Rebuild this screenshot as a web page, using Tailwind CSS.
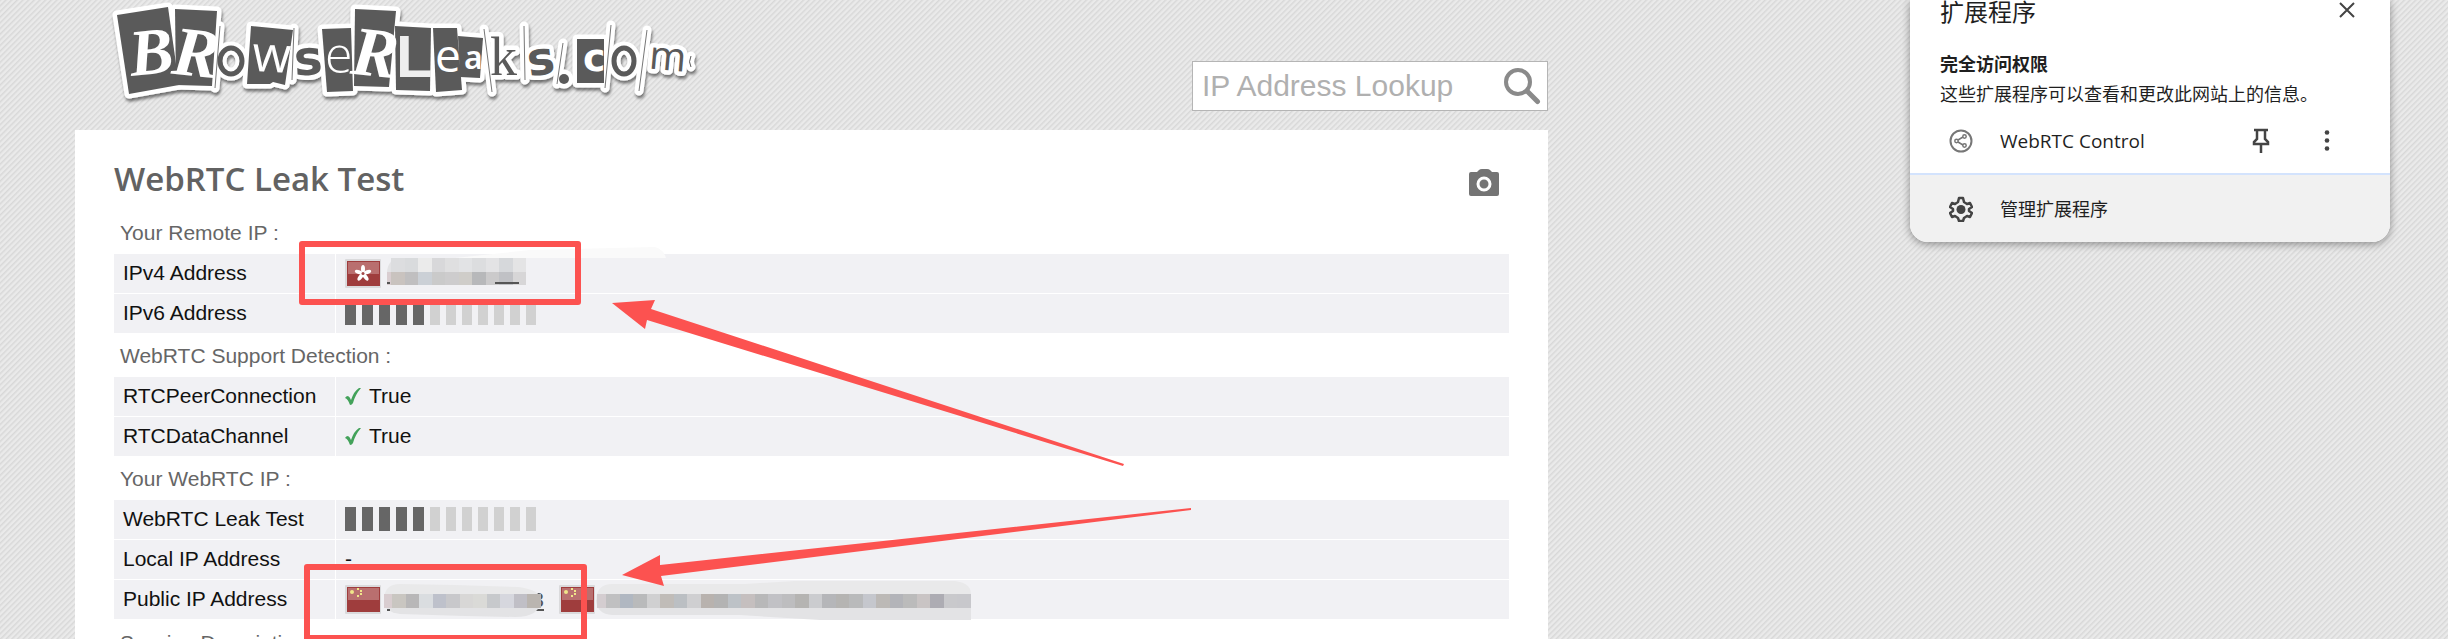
<!DOCTYPE html>
<html lang="en">
<head>
    <meta charset="UTF-8">
    <meta name="viewport" content="width=device-width, initial-scale=1.0">
    <title>WebRTC Leak Test - BrowserLeaks.com</title>
    <!-- Tailwind CSS CDN -->
    <script src="https://cdn.jsdelivr.net/npm/@tailwindcss/browser@4"></script>
</head>
<body class="relative h-screen overflow-hidden bg-[#e2e2e2] bg-[repeating-linear-gradient(135deg,#d8d8d8_0px,#eaeaea_2px,#eaeaea_3px,#d8d8d8_4px)] font-['Liberation_Sans',Arial,sans-serif] text-[21px] leading-7 text-[#111]">

    <div class="ml-[75px] w-full max-w-[1473px]">

        <!-- Header -->
        <header class="flex items-end justify-between pb-[19px] pl-[35px]">
            <a href="#" aria-label="BrowserLeaks.com">
                <svg width="600" height="111" viewBox="0 0 600 111">
                    <defs>
                        <filter id="logo-shadow" x="-5%" y="-10%" width="110%" height="130%">
                            <feDropShadow dx="1" dy="3" stdDeviation="1.5" flood-color="#000" flood-opacity="0.5"/>
                        </filter>
                        <g id="tiles">
                            <path d="M7 15 58 7 69 85 19 94Z"/>
                            <path d="M65 9 107 11 102 86 66 85Z"/>
                            <path d="M141 26 183 30 175 85 163 82 160 84 137 84Z"/>
                            <path d="M212 29 241 28 243 91 217 92Z"/>
                            <path d="M245 9 286 11 279 87 244 86Z"/>
                            <path d="M285 26 321 28 320 91 286 90Z"/>
                            <path d="M323 28 347 28 352 90 326 92Z"/>
                            <path d="M348 36 373 38 370 78 350 77Z"/>
                            <path d="M467 39 494 39 494 83 467 83Z"/>
                        </g>
                        <path id="cuts" d="M110 26 105 88M184 28 182 80M374 29 382 92M414 26 415 80M453 43 447 84M501 25 495 88M537 30 529 91"/>
                        <g id="loose">
                            <text x="184" y="75" font-family="DejaVu Sans, sans-serif" font-weight="bold" font-size="48" transform="rotate(-3 195 60)">s</text>
                            <text x="380" y="75" font-family="Liberation Serif, serif" font-size="54">k</text>
                            <text x="417" y="75" font-family="DejaVu Sans, sans-serif" font-weight="bold" font-size="46" transform="rotate(-8 428 60)">s</text>
                            <circle cx="454" cy="79" r="5"/>
                            <text x="539" y="70" font-family="Open Sans, sans-serif" font-size="40" transform="rotate(5 556 60)">m</text>
                        </g>
                    </defs>
                    <g filter="url(#logo-shadow)" fill="#fff" stroke="#fff" stroke-width="9" stroke-linejoin="round" stroke-linecap="round">
                        <use href="#tiles"/>
                        <use href="#cuts"/>
                        <use href="#loose"/>
                        <g fill="none" stroke-width="13">
                            <ellipse cx="121" cy="61" rx="11" ry="13"/>
                            <ellipse cx="514" cy="61" rx="10" ry="13"/>
                            <path d="M581 56q-3 6 0 11" stroke-width="9"/>
                        </g>
                    </g>
                    <use href="#tiles" fill="#5a5a5a"/>
                    <use href="#cuts" stroke="#777" stroke-width="1"/>
                    <use href="#loose" fill="#5a5a5a"/>
                    <g fill="none" stroke="#5a5a5a" stroke-width="5">
                        <ellipse cx="121" cy="61" rx="11" ry="13"/>
                        <ellipse cx="514" cy="61" rx="10" ry="13"/>
                        <path d="M581 56q-3 6 0 11" stroke-width="1"/>
                    </g>
                    <g fill="#fff">
                        <text x="19" y="74" font-family="Liberation Serif, serif" font-style="italic" font-weight="bold" font-size="66" transform="rotate(-6 40 50)">B</text>
                        <text x="63" y="76" font-family="Liberation Serif, serif" font-style="italic" font-weight="bold" font-size="70" transform="rotate(6 85 50)">R</text>
                        <text x="142" y="72" font-family="Open Sans, sans-serif" font-size="50" transform="rotate(3 160 60)">w</text>
                        <text x="215" y="73" font-family="Open Sans, sans-serif" font-weight="300" font-size="50">e</text>
                        <text x="242" y="76" font-family="Liberation Serif, serif" font-style="italic" font-weight="bold" font-size="70" transform="rotate(6 264 50)">R</text>
                        <text x="286" y="77" font-family="Liberation Sans, sans-serif" font-weight="bold" font-size="60" fill="#eee">L</text>
                        <text x="325" y="72" font-family="Open Sans, sans-serif" font-size="46">e</text>
                        <text x="354" y="69" font-family="Noto Sans, sans-serif" font-weight="600" font-size="32">a</text>
                        <text x="473" y="71" font-family="DejaVu Sans, sans-serif" font-weight="bold" font-size="38">c</text>
                    </g>
                </svg>
            </a>
            <form class="flex h-[50px] w-[356px] items-center border border-[#b5b5b5] bg-white pl-[9px] pr-[6px]">
                <input type="text" aria-label="IP Address Lookup" placeholder="IP Address Lookup" class="min-w-0 flex-1 text-[30px] leading-10 outline-none placeholder:text-[#b0b0b0]">
                <button type="submit" aria-label="Search">
                    <svg width="38" height="38" viewBox="0 0 38 38" fill="none" stroke="#8a8a8a">
                        <circle cx="15" cy="15" r="12" stroke-width="4"/>
                        <path d="M24 24 34.500 34.500" stroke-width="5" stroke-linecap="round"/>
                    </svg>
                </button>
            </form>
        </header>

        <!-- Content -->
        <main class="bg-white px-[39px] pt-5">
            <div class="flex h-[60px] items-center justify-between pr-[9px]">
                <h1 class="pb-0.5 font-['Open_Sans',sans-serif] text-[33px] font-semibold leading-[58px] text-[#626262]">WebRTC Leak Test</h1>
                <button type="button" aria-label="Take screenshot" class="pt-1">
                    <svg width="32" height="30" viewBox="0 0 32 30">
                        <path fill="#747474" d="M3 5h6l2-2q1-1 3-1h5q2 0 3 1l2 2h5q2 0 2 2v20q0 2-2 2H3q-2 0-2-2V7q0-2 2-2z"/>
                        <circle cx="16" cy="17" r="6" fill="#747474" stroke="#fff" stroke-width="3"/>
                    </svg>
                </button>
            </div>

            <table class="w-full table-fixed border-separate border-spacing-0">
                <caption class="h-11 pl-1.5 text-left leading-[46px] text-[#666]">Your Remote IP :</caption>
                <tbody>
                    <tr class="bg-[#f1f1f4]">
                        <th scope="row" class="h-[39px] w-[222px] border-r border-white pb-0.5 pl-[9px] text-left font-normal">IPv4 Address</th>
                        <td class="pl-[9px]">
                            <svg width="36" height="29" viewBox="0 0 36 29" role="img" aria-label="Hong Kong">
                                <rect width="36" height="29" rx="1" fill="#dadadc"/>
                                <rect x="2" y="2" width="33" height="25" fill="#9f3d3d"/>
                                <rect x="3" y="3" width="31" height="12" fill="#b96f6f"/>
                                <g fill="#fff">
                                    <ellipse cx="18" cy="10" rx="2" ry="4"/>
                                    <ellipse cx="18" cy="10" rx="2" ry="4" transform="rotate(72 18 14.500)"/>
                                    <ellipse cx="18" cy="10" rx="2" ry="4" transform="rotate(144 18 14.500)"/>
                                    <ellipse cx="18" cy="10" rx="2" ry="4" transform="rotate(216 18 14.500)"/>
                                    <ellipse cx="18" cy="10" rx="2" ry="4" transform="rotate(288 18 14.500)"/>
                                </g>
                                <circle cx="18" cy="14.500" r="1.500" fill="#a34848"/>
                            </svg>
                        </td>
                    </tr>
                    <tr class="bg-[#f1f1f4]">
                        <th scope="row" class="h-10 border-r border-t border-white pb-0.5 pl-[9px] text-left font-normal">IPv6 Address</th>
                        <td class="border-t border-white pb-0.5 pl-[9px]">
                            <div class="flex gap-1.5">
                                <i class="h-6 w-[11px] bg-[#666]"></i><i class="h-6 w-[11px] bg-[#666]"></i><i class="h-6 w-[11px] bg-[#666]"></i><i class="h-6 w-[11px] bg-[#666]"></i><i class="h-6 w-[11px] bg-[#666]"></i>
                                <i class="h-6 w-2.5 bg-[#d1d1d1]"></i><i class="h-6 w-2.5 bg-[#d1d1d1]"></i><i class="h-6 w-2.5 bg-[#d1d1d1]"></i><i class="h-6 w-2.5 bg-[#d1d1d1]"></i><i class="h-6 w-2.5 bg-[#d1d1d1]"></i><i class="h-6 w-2.5 bg-[#d1d1d1]"></i><i class="h-6 w-2.5 bg-[#d1d1d1]"></i>
                            </div>
                        </td>
                    </tr>
                </tbody>
            </table>

            <table class="w-full table-fixed border-separate border-spacing-0">
                <caption class="h-11 pl-1.5 text-left leading-[46px] text-[#666]">WebRTC Support Detection :</caption>
                <tbody>
                    <tr class="bg-[#f1f1f4]">
                        <th scope="row" class="h-[39px] w-[222px] border-r border-white pb-0.5 pl-[9px] text-left font-normal">RTCPeerConnection</th>
                        <td class="pb-0.5 pl-[9px]">
                            <div class="flex items-center gap-2">
                                <svg width="16" height="18" viewBox="0 0 16 18"><path fill="#43a25a" d="M0 11q1-2 3-2 2 1 3 4Q9 4 14 1l2 0Q10 8 8 16q-1 2-3 2Q3 12 0 11z"/></svg>
                                True
                            </div>
                        </td>
                    </tr>
                    <tr class="bg-[#f1f1f4]">
                        <th scope="row" class="h-10 border-r border-t border-white pb-0.5 pl-[9px] text-left font-normal">RTCDataChannel</th>
                        <td class="border-t border-white pb-0.5 pl-[9px]">
                            <div class="flex items-center gap-2">
                                <svg width="16" height="18" viewBox="0 0 16 18"><path fill="#43a25a" d="M0 11q1-2 3-2 2 1 3 4Q9 4 14 1l2 0Q10 8 8 16q-1 2-3 2Q3 12 0 11z"/></svg>
                                True
                            </div>
                        </td>
                    </tr>
                </tbody>
            </table>

            <table class="w-full table-fixed border-separate border-spacing-0">
                <caption class="h-11 pl-1.5 text-left leading-[46px] text-[#666]">Your WebRTC IP :</caption>
                <tbody>
                    <tr class="bg-[#f1f1f4]">
                        <th scope="row" class="h-[39px] w-[222px] border-r border-white pb-0.5 pl-[9px] text-left font-normal">WebRTC Leak Test</th>
                        <td class="pb-0.5 pl-[9px]">
                            <div class="flex gap-1.5">
                                <i class="h-6 w-[11px] bg-[#666]"></i><i class="h-6 w-[11px] bg-[#666]"></i><i class="h-6 w-[11px] bg-[#666]"></i><i class="h-6 w-[11px] bg-[#666]"></i><i class="h-6 w-[11px] bg-[#666]"></i>
                                <i class="h-6 w-2.5 bg-[#d1d1d1]"></i><i class="h-6 w-2.5 bg-[#d1d1d1]"></i><i class="h-6 w-2.5 bg-[#d1d1d1]"></i><i class="h-6 w-2.5 bg-[#d1d1d1]"></i><i class="h-6 w-2.5 bg-[#d1d1d1]"></i><i class="h-6 w-2.5 bg-[#d1d1d1]"></i><i class="h-6 w-2.5 bg-[#d1d1d1]"></i>
                            </div>
                        </td>
                    </tr>
                    <tr class="bg-[#f1f1f4]">
                        <th scope="row" class="h-10 border-r border-t border-white pb-0.5 pl-[9px] text-left font-normal">Local IP Address</th>
                        <td class="border-t border-white pb-0.5 pl-[9px]">-</td>
                    </tr>
                    <tr class="bg-[#f1f1f4]">
                        <th scope="row" class="h-10 border-r border-t border-white pb-0.5 pl-[9px] text-left font-normal">Public IP Address</th>
                        <td class="border-t border-white pl-[9px]">
                            <div class="flex items-center">
                                <svg width="36" height="29" viewBox="0 0 36 29" role="img" aria-label="China">
                                    <g id="flag-cn">
                                        <rect width="36" height="29" rx="1" fill="#dadadc"/>
                                        <rect x="2" y="2" width="33" height="25" fill="#9f3d3d"/>
                                        <rect x="3" y="3" width="31" height="12" fill="#b96f6f"/>
                                        <g fill="#f0e68a">
                                            <circle cx="7" cy="7" r="2"/>
                                            <path d="M12 3h2v2h-2zM15 5h2v2h-2zM15 8h2v2h-2zM12 10h2v2h-2z"/>
                                        </g>
                                    </g>
                                </svg>
                                <a href="#" class="ml-1.5 w-[157px] text-right text-[#555] underline">3</a>
                                <svg width="36" height="29" viewBox="0 0 36 29" class="ml-[15px]" role="img" aria-label="China"><use href="#flag-cn"/></svg>
                            </div>
                        </td>
                    </tr>
                </tbody>
            </table>

            <h2 class="h-11 pl-1.5 leading-[48px] text-[#666]">Session Description :</h2>
        </main>
    </div>

    <!-- Annotations: hidden addresses, boxes and arrows -->
    <svg class="pointer-events-none absolute left-0 top-0" width="1300" height="639" viewBox="0 0 1300 639">
        <path fill="#fafafa" d="M455 258 530 250 655 247Q664 250 666 258Z"/>
        <g fill="#e3e3e5">
            <path d="M387 272Q388 258 402 258H525V281L512 285H395Q387 285 387 272Z"/>
            <path d="M384 600H541Q540 617 515 617L465 616 400 614Q384 612 384 600Z"/>
            <path d="M596 600H971V620H820L740 615H612Q597 614 596 600Z"/>
        </g>
        <g fill="#e9e9ea">
            <path d="M384 600Q384 584 400 584L455 585 518 587Q541 590 541 600Z"/>
            <path d="M596 600Q597 584 612 584L745 584 795 581H955Q971 583 971 594V600Z"/>
        </g>
        <g id="mosaic"></g>
        <path fill="#555" d="M387 282h3v2h-3zM387 609h3v2h-3zM495 282h24v2h-24z"/>
        <g fill="none" stroke="#fc5250" stroke-width="6" stroke-linejoin="round">
            <rect x="302" y="244" width="276" height="58"/>
            <rect x="307" y="567" width="277" height="71"/>
        </g>
        <g fill="#fc5250">
            <path d="M612 303 655 300 651 309 1124 464 1123 466 647 320 645 329Z"/>
            <path d="M622 575 660 555 660 565 1191 508 1191 510 661 576 664 586Z"/>
        </g>
    </svg>

    <!-- Extensions popup -->
    <aside lang="zh-CN" class="absolute right-[58px] top-0 w-[480px] overflow-hidden rounded-b-[18px] bg-white font-['Open_Sans','Noto_Sans_CJK_SC',sans-serif] text-lg leading-[30px] text-[#1f1f1f] shadow-[0_2px_8px_rgba(0,0,0,0.4)]">
        <div class="px-[30px]">
            <div class="flex h-6 items-center justify-between">
                <h2 class="text-2xl leading-6">扩展程序</h2>
                <button type="button" aria-label="关闭" class="mb-1 mr-1">
                    <svg width="18" height="18" viewBox="0 0 18 18" stroke="#444" stroke-width="2"><path d="M2 2 16 16M16 2 2 16"/></svg>
                </button>
            </div>
            <h3 class="mt-[25px] font-bold">完全访问权限</h3>
            <p>这些扩展程序可以查看和更改此网站上的信息。</p>
            <div class="flex h-16 items-center pl-[9px] pr-6">
                <svg width="24" height="24" viewBox="0 0 24 24" fill="none" stroke="#777" stroke-width="1.500">
                    <circle cx="12" cy="12" r="10.500" stroke-width="2"/>
                    <path d="M9 11 14 8M9 13 14 16"/>
                    <circle cx="7.500" cy="12" r="1.700"/>
                    <circle cx="15.500" cy="7.500" r="1.700"/>
                    <circle cx="15.500" cy="16.500" r="1.700"/>
                </svg>
                <span class="ml-[27px] flex-1 text-[19px]">WebRTC Control</span>
                <button type="button" aria-label="固定">
                    <svg width="18" height="26" viewBox="0 0 18 26" fill="none" stroke="#444" stroke-width="2.500">
                        <path d="M2 2H16M5 2V11L2 14V16H16V14L13 11V2M9 16V25"/>
                    </svg>
                </button>
                <button type="button" aria-label="更多" class="ml-12">
                    <svg width="18" height="24" viewBox="0 0 18 24" fill="#444"><circle cx="9" cy="3.500" r="2.300"/><circle cx="9" cy="11.500" r="2.300"/><circle cx="9" cy="19.500" r="2.300"/></svg>
                </button>
            </div>
        </div>
        <button type="button" class="flex h-[69px] w-full items-center border-t-2 border-[#d3e3fd] bg-[#f1f1f1] pl-[39px]">
            <svg width="24" height="26" viewBox="0 0 24 26">
                <path fill="none" stroke="#444" stroke-width="2.500" stroke-linejoin="round" d="M10 2h4l1 4 3 2 3-1 2 4-3 2v2l3 2-2 4-3-1-3 2-1 3h-4l-1-3-3-2-3 1-2-4 3-2v-2L1 11l2-4 3 1 3-2z"/>
                <circle cx="12" cy="13.500" r="4.500" fill="#444"/>
            </svg>
            <span class="ml-[27px]">管理扩展程序</span>
        </button>
    </aside>

    <script>
        // each row: x start, y, height, block width, colours
        const rows = [
            [391, 258, 14, 13.5, ['#dcdddf', '#d9dbdd', '#ebebeb', '#d8d8da', '#dfdfe0', '#e2e3e5', '#dcdddf', '#e3e3e5', '#d6d8db', '#e4e4e5']],
            [387, 272, 13, 4, ['#d9cdd0']],
            [391, 272, 13, 13.5, ['#c9c3bf', '#c0bfc0', '#cbd0d6', '#cacaca', '#cdcccd', '#cfcdc9', '#b7b8ba', '#cbcacb', '#c0c1c5', '#d7d6d7']],
            [384, 594, 14, 8, ['#d9cdd0']],
            [392, 594, 14, 13.5, ['#c9c6c1', '#b8b7b8', '#dadde0', '#bec1cb', '#c8c8cb', '#d8d7d6', '#dadad7', '#c7c9cc', '#d6d7de', '#c0bfc6', '#bab5b0']],
            [597, 594, 14, 9, ['#d4cdd0']],
            [606, 594, 14, 13.5, ['#c0c0c1', '#b0b7c1', '#b9babb', '#d0d0d1', '#c0bcb8', '#bbbfc3', '#cfcfd1', '#b8b2ae', '#b3b3b3', '#bdc2c7', '#c5bfbf', '#b8b8b9', '#c1c1c5', '#bdbdbf', '#b5b4b2', '#cbcccf', '#b5b6b9', '#b5b4b2', '#b9babb', '#c5c7cd', '#bcb9b6', '#b3b4b9', '#bbbbbb', '#c9c4c4', '#adacb3', '#c9c9cc', '#c8c8cc']]
        ];
        const mosaic = document.getElementById('mosaic');
        rows.forEach(([x, y, h, w, colours]) => {
            colours.forEach((colour, i) => {
                const rect = document.createElementNS('http://www.w3.org/2000/svg', 'rect');
                rect.setAttribute('x', Math.round(x + i * w));
                rect.setAttribute('y', y);
                rect.setAttribute('width', Math.round(x + (i + 1) * w) - Math.round(x + i * w));
                rect.setAttribute('height', h);
                rect.setAttribute('fill', colour);
                mosaic.appendChild(rect);
            });
        });
    </script>
</body>
</html>
